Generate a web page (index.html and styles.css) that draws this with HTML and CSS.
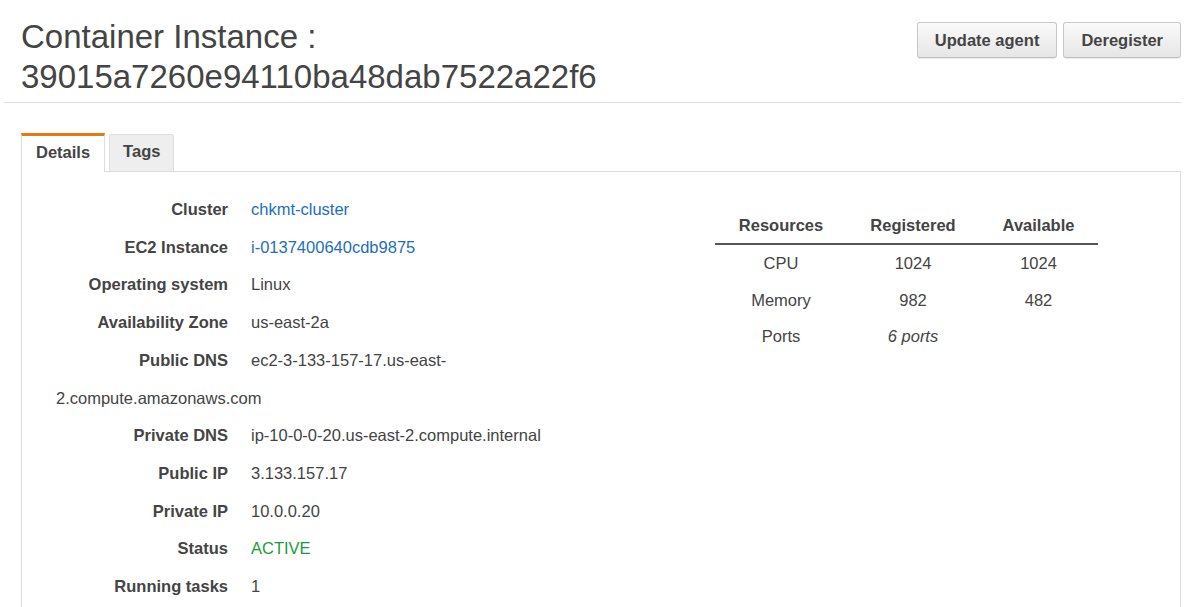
FILE: index.html
```html
<!DOCTYPE html>
<html lang="en">
<head>
  <meta charset="UTF-8">
  <meta name="viewport" content="width=device-width, initial-scale=1.0">
  <title>Container Instance</title>
  <link rel="stylesheet" href="styles.css">
</head>
<body>
  <div class="page">
    <header class="header">
      <h1 class="title">Container Instance : <span class="instance-id">39015a7260e94110ba48dab7522a22f6</span></h1>
      <div class="actions">
        <button class="btn">Update agent</button>
        <button class="btn">Deregister</button>
      </div>
    </header>

    <div class="content">
      <ul class="tabs">
        <li class="tab active">Details</li>
        <li class="tab">Tags</li>
      </ul>

      <div class="panel">
        <div class="details">
          <div class="row"><span class="label">Cluster</span><a class="link" href="#">chkmt-cluster</a></div>
          <div class="row"><span class="label">EC2 Instance</span><a class="link" href="#">i-0137400640cdb9875</a></div>
          <div class="row"><span class="label">Operating system</span>Linux</div>
          <div class="row"><span class="label">Availability Zone</span>us-east-2a</div>
          <div class="row"><span class="label">Public DNS</span>ec2-3-133-157-17.us-east-<wbr>2.compute.amazonaws.com</div>
          <div class="row"><span class="label">Private DNS</span>ip-10-0-0-20.us-east-2.compute.internal</div>
          <div class="row"><span class="label">Public IP</span>3.133.157.17</div>
          <div class="row"><span class="label">Private IP</span>10.0.0.20</div>
          <div class="row"><span class="label">Status</span><span class="status-active">ACTIVE</span></div>
          <div class="row"><span class="label">Running tasks</span>1</div>
        </div>

        <div class="resources">
          <table class="resource-table">
            <thead>
              <tr>
                <th class="col-name">Resources</th>
                <th class="col-reg">Registered</th>
                <th class="col-avail">Available</th>
              </tr>
            </thead>
            <tbody>
              <tr><td>CPU</td><td>1024</td><td>1024</td></tr>
              <tr><td>Memory</td><td>982</td><td>482</td></tr>
              <tr><td>Ports</td><td><em>6 ports</em></td><td></td></tr>
            </tbody>
          </table>
        </div>
      </div>
    </div>
  </div>
</body>
</html>
```

FILE: styles.css
```css
body {
  margin: 0;
  font-family: "Liberation Sans", Arial, sans-serif;
  font-size: 16.5px;
  color: #444;
  background: #fff;
}
.page {
  margin: 0 19px 0 4px;
}

/* page header */
.header {
  display: flex;
  justify-content: space-between;
  align-items: flex-start;
  padding: 17px 0 5px 17px;
  border-bottom: 1px solid #ddd;
}
.title {
  margin: 0;
  font-size: 33px;
  font-weight: normal;
  line-height: 40px;
  color: #444;
}
.instance-id {
  display: block;
}
.actions {
  display: flex;
  gap: 6px;
  margin-top: 5px;
}
.btn {
  height: 36px;
  padding: 0 17px;
  font-family: "Liberation Sans", Arial, sans-serif;
  font-size: 16.5px;
  font-weight: bold;
  color: #444;
  background: linear-gradient(#fafafa, #e6e6e6);
  border: 1px solid #c8c8c8;
  border-bottom-color: #bdbdbd;
  border-radius: 3px;
  box-shadow: 0 1px 1px rgba(0, 0, 0, 0.08);
  cursor: pointer;
}

/* tabs */
.content {
  margin: 30px 0 0 17px;
}
.tabs {
  display: flex;
  align-items: flex-end;
  gap: 4px;
  margin: 0;
  padding: 0;
  list-style: none;
}
.tab {
  padding: 0 13px 3px;
  line-height: 33px;
  font-weight: bold;
  background: #eee;
  border: 1px solid #ddd;
  border-bottom: none;
  border-radius: 3px 3px 0 0;
}
.tab.active {
  position: relative;
  z-index: 1;
  padding: 0 14px 3px;
  margin-bottom: -1px;
  background: #fff;
  border-top: 3px solid #e47911;
  border-radius: 0;
}

/* details panel */
.panel {
  display: grid;
  grid-template-columns: 545px 1fr;
  min-height: 460px;
  padding: 19px 0 0 34px;
  border: 1px solid #ddd;
  border-bottom: none;
}
.row {
  line-height: 37.7px;
}
.label {
  display: inline-block;
  width: 172px;
  margin-right: 23px;
  text-align: right;
  font-weight: bold;
}
.link {
  color: #1f6dbf;
  text-decoration: none;
}
.status-active {
  color: #1d9a3c;
}

/* resources table */
.resources {
  padding: 15px 0 0 114px;
}
.resource-table {
  width: 383px;
  table-layout: fixed;
  border-collapse: separate;
  border-spacing: 0;
}
.resource-table th {
  padding: 1px 0 0;
  line-height: 36px;
  font-weight: bold;
  text-align: center;
  border-bottom: 2px solid #555;
}
.resource-table td {
  padding: 0;
  line-height: 36.5px;
  text-align: center;
}
.col-name,
.col-reg {
  width: 132px;
}
.col-avail {
  width: 119px;
}
```
